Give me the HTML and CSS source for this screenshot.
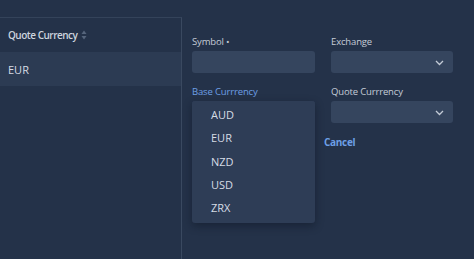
FILE: index.html
```html
<!DOCTYPE html>
<html>
<head>
<meta charset="utf-8">
<link rel="stylesheet" href="styles.css">
</head>
<body>
<div class="page">
  <div class="table-panel">
    <div class="th">
      <span>Quote Currency</span>
      <svg class="sort" width="6" height="10" viewBox="0 0 6 10"><path d="M3 0.5L5.5 4H0.5Z" fill="#56657c"/><path d="M3 9.5L5.5 6H0.5Z" fill="#56657c"/></svg>
    </div>
    <div class="tr">EUR</div>
  </div>
  <div class="form">
    <div class="field">
      <label class="label">Symbol <span class="req">•</span></label>
      <div class="control"></div>
    </div>
    <div class="field">
      <label class="label">Exchange</label>
      <div class="control select">
        <svg class="chev" width="9" height="6" viewBox="0 0 9 6"><path d="M1 1l3.5 3.5L8 1" fill="none" stroke="#c3cbd6" stroke-width="1.3"/></svg>
      </div>
    </div>
    <div class="field">
      <label class="label active">Base Currrency</label>
      <div class="control select">
        <ul class="menu">
          <li>AUD</li>
          <li>EUR</li>
          <li>NZD</li>
          <li>USD</li>
          <li>ZRX</li>
        </ul>
      </div>
    </div>
    <div class="field">
      <label class="label">Quote Currrency</label>
      <div class="control select">
        <svg class="chev" width="9" height="6" viewBox="0 0 9 6"><path d="M1 1l3.5 3.5L8 1" fill="none" stroke="#c3cbd6" stroke-width="1.3"/></svg>
      </div>
    </div>
    <div class="actions">
      <button class="cancel">Cancel</button>
    </div>
  </div>
</div>
</body>
</html>
```
FILE: styles.css
```css
html, body {
  margin: 0;
  padding: 0;
  background: #243249;
  width: 474px;
  height: 259px;
  overflow: hidden;
  font-family: "Open Sans", "Noto Sans", sans-serif;
  color: #d3d9e2;
}
.page {
  display: flex;
  height: 259px;
}
.table-panel {
  width: 181px;
  margin-top: 17px;
  border-top: 1px solid #34435a;
  border-right: 1px solid #3a4960;
}
.th {
  height: 34px;
  display: flex;
  align-items: center;
  gap: 4px;
  padding-left: 8px;
  font-size: 10px;
  font-weight: 600;
  color: #cdd4de;
  letter-spacing: -0.5px;
}
.sort { display: block; }
.tr {
  height: 34px;
  display: flex;
  align-items: center;
  padding-left: 8px;
  background: #2c3b53;
  font-size: 11px;
  color: #d6dce5;
}
.form {
  display: grid;
  grid-template-columns: 123px 122px;
  column-gap: 16px;
  row-gap: 12px;
  padding: 35px 0 0 10px;
  align-content: start;
}
.field {
  display: flex;
  flex-direction: column;
  gap: 3px;
}
.label {
  font-size: 9.5px;
  line-height: 13px;
  color: #c5ccd7;
  letter-spacing: -0.15px;
}
.label.active { color: #6d9fe6; }
.req { color: #c5ccd7; }
.control {
  position: relative;
  height: 22px;
  border-radius: 3px;
  background: #35455e;
}
.chev {
  position: absolute;
  right: 9px;
  top: 9px;
}
.menu {
  position: absolute;
  left: 0;
  top: 0;
  width: 123px;
  margin: 0;
  padding: 2px 0 4px;
  list-style: none;
  background: #2e3d56;
  border-radius: 3px;
  box-shadow: 0 3px 8px rgba(10, 18, 30, 0.45);
  z-index: 2;
}
.menu li {
  height: 23.3px;
  line-height: 23px;
  padding-left: 19px;
  font-size: 11px;
  color: #d6dce5;
}
.actions {
  grid-column: 2;
  margin-top: -6px;
  margin-left: -7px;
}
.cancel {
  background: none;
  border: 0;
  padding: 0;
  font-family: inherit;
  font-size: 10px;
  font-weight: 700;
  color: #6d9fe6;
  letter-spacing: -0.3px;
}
```
